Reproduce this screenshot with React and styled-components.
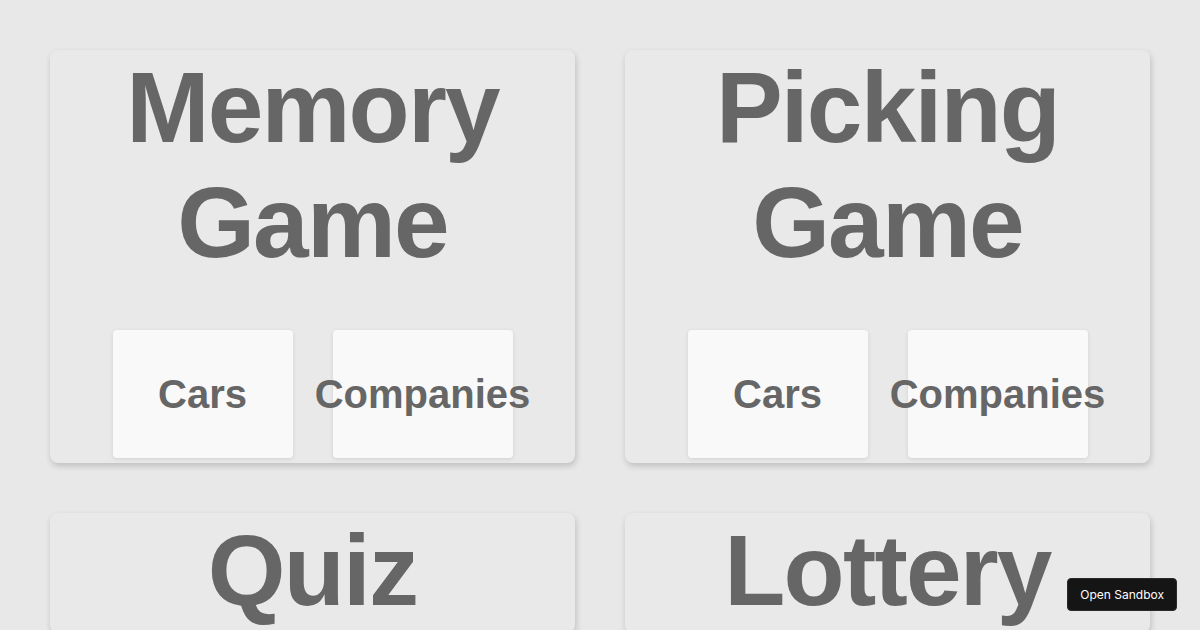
import React from 'react'
import styled, { createGlobalStyle } from 'styled-components'

const GlobalStyle = createGlobalStyle`
  html, body {
    margin: 0;
    padding: 0;
    background: #e8e8e8;
    font-family: "Liberation Sans", Arial, sans-serif;
  }
`

const Grid = styled.div`
  display: grid;
  grid-template-columns: repeat(2, 525px);
  gap: 50px;
  padding: 50px;
`

const Card = styled.div`
  background: #e9e9e9;
  border-radius: 8px;
  box-shadow: 1px 3px 6px rgba(0, 0, 0, 0.18);
  display: flex;
  flex-direction: column;
  align-items: center;
  padding-bottom: 5px;
`

const Title = styled.h1`
  margin: 0;
  font-size: 100px;
  font-weight: 700;
  line-height: 115px;
  letter-spacing: -1.8px;
  color: #666;
  text-align: center;
`

const Options = styled.div`
  display: flex;
  justify-content: center;
  margin-top: 50px;
`

const Option = styled.button`
  width: 180px;
  height: 128px;
  margin: 0 20px;
  padding: 0;
  border: none;
  border-radius: 4px;
  background: #f9f9f9;
  box-shadow: 0 1px 4px rgba(0, 0, 0, 0.1);
  display: flex;
  align-items: center;
  justify-content: center;
  white-space: nowrap;
  font-family: "Liberation Sans", Arial, sans-serif;
  font-size: 40px;
  font-weight: 700;
  color: #666;
  cursor: pointer;
`

const SandboxButton = styled.a`
  position: fixed;
  right: 23px;
  bottom: 19px;
  box-sizing: border-box;
  height: 33px;
  padding: 0 12px;
  display: flex;
  align-items: center;
  background: #151515;
  border: 1px solid #2a2a2a;
  border-radius: 4px;
  color: #fff;
  font-family: Inter, "Liberation Sans", sans-serif;
  font-size: 12px;
  text-decoration: none;
`

const games = [
  { title: ['Memory', 'Game'], options: ['Cars', 'Companies'] },
  { title: ['Picking', 'Game'], options: ['Cars', 'Companies'] },
  { title: ['Quiz'], options: [] },
  { title: ['Lottery'], options: [] },
]

const App = () => (
  <>
    <GlobalStyle />
    <Grid>
      {games.map((g) => (
        <Card key={g.title.join(' ')}>
          <Title>
            {g.title.map((t, i) => (
              <React.Fragment key={t}>
                {i > 0 && <br />}
                {t}
              </React.Fragment>
            ))}
          </Title>
          {g.options.length > 0 && (
            <Options>
              {g.options.map((o) => (
                <Option key={o}>{o}</Option>
              ))}
            </Options>
          )}
        </Card>
      ))}
    </Grid>
    <SandboxButton href="#">Open Sandbox</SandboxButton>
  </>
)

export default App
